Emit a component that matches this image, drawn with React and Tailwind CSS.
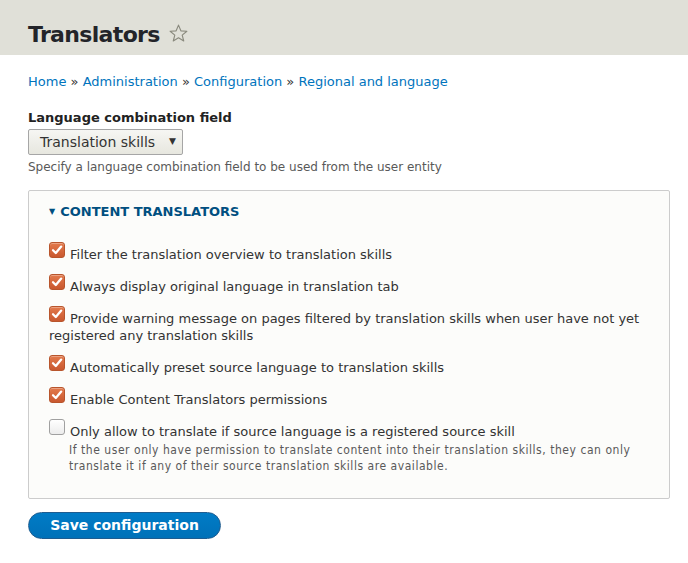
import React from "react";

const Check = ({ checked }) =>
  checked ? (
    <span className="relative -top-[4px] inline-flex w-[16px] h-[16px] rounded-[3px] border border-[#b8552c] bg-gradient-to-b from-[#e37a4c] to-[#c9582f] items-center justify-center align-top mr-[5px] shadow-[inset_0_1px_0_rgba(255,255,255,0.3)]">
      <svg width="12" height="12" viewBox="0 0 12 12">
        <path d="M2 6.2 L4.8 9 L10.2 2.6" fill="none" stroke="white" strokeWidth="2.3" strokeLinecap="round" strokeLinejoin="round" />
      </svg>
    </span>
  ) : (
    <span className="relative -top-[4px] inline-block w-[16px] h-[16px] rounded-[3px] border border-[#a0a0a0] bg-gradient-to-b from-[#ffffff] to-[#ececec] align-top mr-[5px]"></span>
  );

const items = [
  { c: true, t: "Filter the translation overview to translation skills" },
  { c: true, t: "Always display original language in translation tab" },
  {
    c: true,
    t: "Provide warning message on pages filtered by translation skills when user have not yet registered any translation skills",
  },
  { c: true, t: "Automatically preset source language to translation skills" },
  { c: true, t: "Enable Content Translators permissions" },
];

export default function App() {
  return (
    <div className="min-h-[563px] bg-white text-[#333] font-['DejaVu_Sans',sans-serif]">
      <div className="bg-[#e0e0d8] h-[55px] flex items-center pl-[28px] pt-[14px]">
        <h1 className="text-[22px] font-bold text-[#232429] tracking-[-0.03em] leading-none">Translators</h1>
        <svg className="ml-[9px] -mt-[2px]" width="19" height="19" viewBox="0 0 20 20">
          <path
            d="M10 1.2 L12.5 7.2 L18.8 7.6 L13.9 11.7 L15.5 17.9 L10 14.5 L4.5 17.9 L6.1 11.7 L1.2 7.6 L7.5 7.2 Z"
            fill="none"
            stroke="#8a8a7e"
            strokeWidth="1.2"
            strokeLinejoin="round"
          />
        </svg>
      </div>
      <div className="px-[28px]">
        <div className="mt-[18px] text-[13px] text-[#0074bd] leading-[18px]">
          <span>Home</span> <span className="text-[#333]">»</span> <span>Administration</span>{" "}
          <span className="text-[#333]">»</span> <span>Configuration</span> <span className="text-[#333]">»</span>{" "}
          <span>Regional and language</span>
        </div>
        <div className="mt-[18px] text-[13px] font-bold leading-[18px] text-[#222]">Language combination field</div>
        <div className="mt-[2px] inline-flex items-center h-[26px] w-[155px] border border-[#a6a6a6] rounded-[2px] bg-gradient-to-b from-[#f6f6f3] to-[#e7e7df] pl-[11px] text-[14px] text-[#333]">
          <span>Translation skills</span>
          <span className="ml-[14px] text-[9px]">▼</span>
        </div>
        <div className="mt-[3px] text-[12px] text-[#595959] leading-[18px]">
          Specify a language combination field to be used from the user entity
        </div>
        <div className="mt-[14px] border border-[#ccc] rounded-[2px] bg-[#fcfcfa] w-[642px] h-[309px] pt-[12px] px-[20px]">
          <div className="flex items-center text-[13px] font-bold text-[#004f80] leading-[18px]">
            <span className="text-[8px] mr-[5px]">▼</span>
            <span>CONTENT TRANSLATORS</span>
          </div>
          <div className="mt-[25px] text-[13px] leading-[17px] text-[#333]">
            {items.map((it, i) => (
              <div key={i} className="mb-[15px]">
                <Check checked={it.c} />
                {it.t}
              </div>
            ))}
            <div>
              <Check checked={false} />
              Only allow to translate if source language is a registered source skill
              <div className="pl-[20px] mt-[2px] text-[12px] leading-[16px] text-[#595959] font-['DejaVu_Sans_Condensed','DejaVu_Sans',sans-serif] tracking-[0.045em]">
                If the user only have permission to translate content into their translation skills, they can only translate it if any of their source translation skills are available.
              </div>
            </div>
          </div>
        </div>
        <div className="mt-[13px] inline-flex items-center justify-center w-[193px] h-[27px] rounded-full border border-[#1e5c90] bg-gradient-to-b from-[#007bc6] to-[#0071b8] text-white text-[14px] font-bold">
          Save configuration
        </div>
      </div>
    </div>
  );
}
